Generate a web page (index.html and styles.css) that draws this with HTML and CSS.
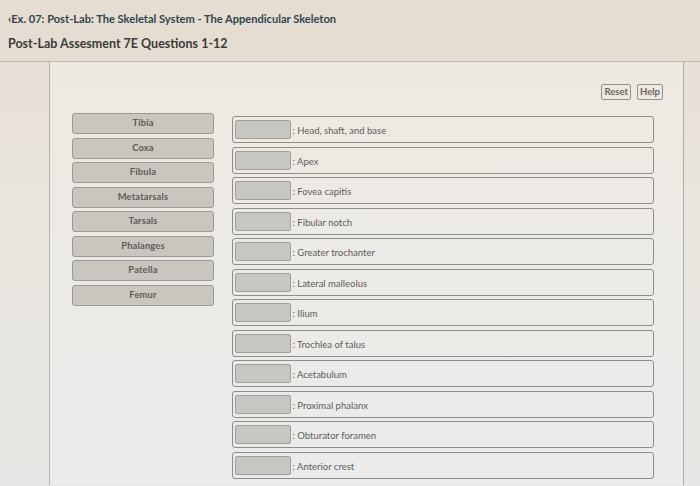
FILE: index.html
```html
<!DOCTYPE html>
<html>
<head>
<meta charset="utf-8">
<link rel="stylesheet" href="styles.css">
</head>
<body>
<header class="top">
  <div class="crumb">&#x2039;Ex. 07: Post-Lab: The Skeletal System - The Appendicular Skeleton</div>
  <div class="title">Post-Lab Assesment 7E Questions 1-12</div>
</header>
<div class="main">
  <div class="gutter"></div>
  <section class="panel">
    <div class="toolbar">
      <button class="btn">Reset</button>
      <button class="btn">Help</button>
    </div>
    <div class="work">
      <div class="bank">
        <div class="item">Tibia</div>
        <div class="item">Coxa</div>
        <div class="item">Fibula</div>
        <div class="item">Metatarsals</div>
        <div class="item">Tarsals</div>
        <div class="item">Phalanges</div>
        <div class="item">Patella</div>
        <div class="item">Femur</div>
      </div>
      <div class="rows">
        <div class="row"><span class="drop"></span><span class="label">: Head, shaft, and base</span></div>
        <div class="row"><span class="drop"></span><span class="label">: Apex</span></div>
        <div class="row"><span class="drop"></span><span class="label">: Fovea capitis</span></div>
        <div class="row"><span class="drop"></span><span class="label">: Fibular notch</span></div>
        <div class="row"><span class="drop"></span><span class="label">: Greater trochanter</span></div>
        <div class="row"><span class="drop"></span><span class="label">: Lateral malleolus</span></div>
        <div class="row"><span class="drop"></span><span class="label">: Ilium</span></div>
        <div class="row"><span class="drop"></span><span class="label">: Trochlea of talus</span></div>
        <div class="row"><span class="drop"></span><span class="label">: Acetabulum</span></div>
        <div class="row"><span class="drop"></span><span class="label">: Proximal phalanx</span></div>
        <div class="row"><span class="drop"></span><span class="label">: Obturator foramen</span></div>
        <div class="row"><span class="drop"></span><span class="label">: Anterior crest</span></div>
      </div>
    </div>
  </section>
  <div class="gutter right"></div>
</div>
</body>
</html>
```
FILE: styles.css
```css
html, body {
  margin: 0;
  padding: 0;
}
body {
  width: 700px;
  height: 486px;
  overflow: hidden;
  font-family: Lato, "Open Sans", "Liberation Sans", sans-serif;
  background: linear-gradient(180deg, #e6ded2 0%, #e9e5de 45%, #e7e7e5 100%);
}
.top {
  height: 62px;
  border-bottom: 1px solid #bfb8ae;
  padding: 12px 0 0 8px;
  box-sizing: border-box;
  background: #e5ddd1;
}
.crumb {
  font-size: 11.1px;
  font-weight: 700;
  color: #2e4650;
  letter-spacing: 0;
  line-height: 14px;
}
.title {
  margin-top: 11px;
  font-size: 12.5px;
  font-weight: 700;
  color: #3b3b3b;
  letter-spacing: 0;
  line-height: 14px;
}
.main {
  display: flex;
  height: 423px;
}
.gutter {
  width: 49px;
  border-right: 1px solid #b8b3ab;
}
.gutter.right {
  width: 16px;
  border-right: none;
  border-left: 1px solid #b0ada8;
}
.panel {
  flex: 1;
  padding: 22px 0 0 22px;
  background: linear-gradient(180deg, #ede9e2 0%, #eceae6 50%, #eaebeb 100%);
}
.toolbar {
  display: flex;
  justify-content: flex-end;
  gap: 6px;
  padding-right: 20px;
  height: 16px;
}
.btn {
  font-family: inherit;
  font-size: 9.5px;
  font-weight: 700;
  color: #6a6762;
  background: #ece8e1;
  border: 1.5px solid #95918b;
  border-radius: 2px;
  padding: 0 2px;
  height: 16px;
  line-height: 12px;
}
.work {
  display: flex;
  gap: 18px;
  margin-top: 13px;
}
.bank {
  width: 142px;
  display: flex;
  flex-direction: column;
  gap: 3.5px;
}
.item {
  height: 21px;
  box-sizing: border-box;
  background: #c9c6c0;
  border: 1px solid #9c9994;
  border-radius: 3px;
  font-size: 9.4px;
  font-weight: 700;
  color: #5d5b57;
  letter-spacing: 0.15px;
  text-align: center;
  line-height: 17px;
}
.rows {
  width: 422px;
  padding-top: 3px;
  display: flex;
  flex-direction: column;
  gap: 3.5px;
}
.row {
  height: 27px;
  box-sizing: border-box;
  border: 1.5px solid #8f8d89;
  border-radius: 3px;
  display: flex;
  align-items: center;
  padding-left: 1.5px;
}
.drop {
  width: 56px;
  height: 19px;
  box-sizing: border-box;
  background: #c6c6c3;
  border: 1px solid #a19f9b;
  border-radius: 2px;
}
.label {
  margin-left: 2px;
  margin-top: 2px;
  font-size: 9.5px;
  color: #5d5c59;
  letter-spacing: 0;
}
```
